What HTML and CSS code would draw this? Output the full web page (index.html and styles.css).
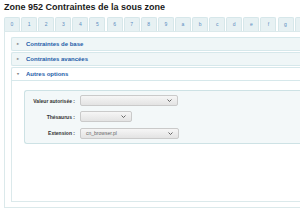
FILE: index.html
```html
<!DOCTYPE html>
<html lang="fr">
<head>
<meta charset="utf-8">
<title>Zone 952</title>
<link rel="stylesheet" href="styles.css">
</head>
<body>
<h1 class="title">Zone 952 Contraintes de la sous zone</h1>
<ul class="tabs">
  <li class="tab">0</li><li class="tab">1</li><li class="tab">2</li><li class="tab">3</li><li class="tab">4</li>
  <li class="tab">5</li><li class="tab">6</li><li class="tab">7</li><li class="tab">8</li><li class="tab">9</li>
  <li class="tab">a</li><li class="tab">b</li><li class="tab">c</li><li class="tab">d</li><li class="tab">e</li>
  <li class="tab">f</li><li class="tab">g</li><li class="tab"></li>
</ul>
<div class="panel">
  <div class="acc-head"><span class="arrow">&#9656;</span>Contraintes de base</div>
  <div class="acc-head"><span class="arrow">&#9656;</span>Contraintes avancées</div>
  <div class="acc-head active"><span class="arrow">&#9662;</span>Autres options</div>
  <div class="acc-body">
    <div class="fieldset">
      <label class="lbl">Valeur autorisée :</label>
      <div class="sel w1"><span class="val"></span><svg class="chev" width="5" height="3" viewBox="0 0 5 3"><path d="M0.5 0.5 L2.5 2.5 L4.5 0.5" fill="none" stroke="#555" stroke-width="0.9"/></svg></div>
      <label class="lbl">Thésaurus :</label>
      <div class="sel w2"><span class="val"></span><svg class="chev" width="5" height="3" viewBox="0 0 5 3"><path d="M0.5 0.5 L2.5 2.5 L4.5 0.5" fill="none" stroke="#555" stroke-width="0.9"/></svg></div>
      <label class="lbl">Extension :</label>
      <div class="sel w3"><span class="val">cn_browser.pl</span><svg class="chev" width="5" height="3" viewBox="0 0 5 3"><path d="M0.5 0.5 L2.5 2.5 L4.5 0.5" fill="none" stroke="#555" stroke-width="0.9"/></svg></div>
    </div>
  </div>
</div>
</body>
</html>
```
FILE: styles.css
```css
html, body {
  margin: 0;
  padding: 0;
  background: #ffffff;
  overflow: hidden;
}
body {
  font-family: "Liberation Sans", Arial, sans-serif;
  width: 300px;
  height: 212px;
}
.title {
  margin: 0;
  padding: 2px 0 0 4px;
  font-size: 9px;
  line-height: 11px;
  font-weight: bold;
  color: #1a1a1a;
  white-space: nowrap;
}
.tabs {
  list-style: none;
  margin: 4px 0 0 0;
  padding: 0 0 0 4px;
  display: flex;
  gap: 1.1px;
  white-space: nowrap;
}
.tab {
  flex: 0 0 16px;
  height: 14px;
  box-sizing: border-box;
  background: #e7f1f3;
  border: 1px solid #d6e7ea;
  border-bottom: none;
  border-radius: 2px 2px 0 0;
  color: #5b8cc0;
  font-size: 5px;
  line-height: 13px;
  text-align: center;
}
.panel {
  margin-left: 4px;
  width: 320px;
  box-sizing: border-box;
  border: 1px solid #dbe9eb;
  border-right: none;
  padding: 5px 0 5px 6px;
}
.acc-head {
  height: 14px;
  box-sizing: border-box;
  margin-bottom: 1px;
  background: #eff6f7;
  border: 1px solid #d6e8eb;
  border-right: none;
  border-radius: 2px 0 0 2px;
  color: #1d5ca8;
  font-size: 6px;
  font-weight: bold;
  line-height: 12px;
  padding-left: 5px;
  white-space: nowrap;
}
.arrow {
  display: inline-block;
  width: 9px;
  color: #888;
  font-size: 4px;
  vertical-align: top;
}
.acc-head.active {
  background: #ffffff;
  margin-bottom: 0;
  border-radius: 2px 0 0 0;
}
.acc-body {
  border: 1px solid #dbe9eb;
  border-top: none;
  border-right: none;
  padding: 9px 0 57px 12px;
}
.fieldset {
  box-sizing: border-box;
  background: #f3f8f9;
  border: 1px solid #cde2e5;
  border-right: none;
  border-radius: 3px 0 0 3px;
  padding: 4px 0 4px 0;
  display: grid;
  grid-template-columns: 50px auto;
  column-gap: 5px;
  row-gap: 5.3px;
  align-items: center;
  justify-items: start;
}
.lbl {
  justify-self: end;
  font-size: 5px;
  font-weight: bold;
  color: #333;
  white-space: nowrap;
}
.sel {
  height: 11px;
  box-sizing: border-box;
  background: linear-gradient(#f6f6f6, #e3e3e3);
  border: 1px solid #cacaca;
  border-radius: 2px;
  display: flex;
  align-items: center;
  justify-content: space-between;
  padding: 0 5px 0 5px;
}
.w1 { width: 98px; }
.w2 { width: 52px; }
.w3 { width: 99px; }
.val {
  font-size: 5px;
  color: #666;
  white-space: nowrap;
}
.chev {
  display: block;
}
```
